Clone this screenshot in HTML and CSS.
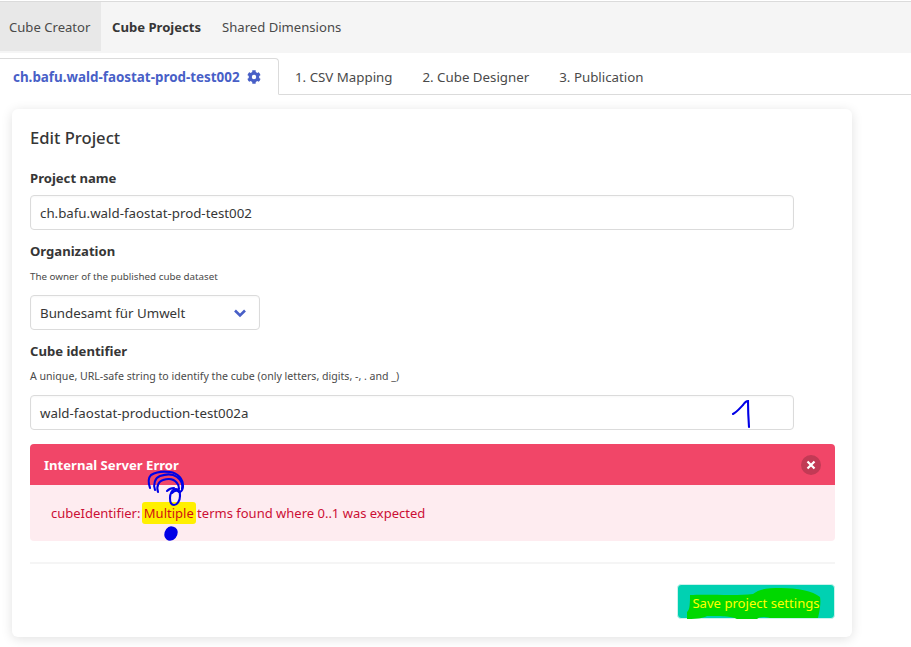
FILE: index.html
```html
<!DOCTYPE html>
<html lang="en">
<head>
<meta charset="utf-8">
<title>Edit Project</title>
<link rel="stylesheet" href="styles.css">
</head>
<body>
<nav class="navbar">
  <a class="nav-item nav-brand">Cube Creator</a>
  <a class="nav-item nav-active">Cube Projects</a>
  <a class="nav-item">Shared Dimensions</a>
</nav>
<div class="tabs">
  <a class="tab tab-active">ch.bafu.wald-faostat-prod-test002
    <svg class="gear" viewBox="0 0 512 512"><path fill-rule="evenodd" d="M487 316l-43-25a195 195 0 0 0 0-70l43-25c5-3 7-9 5-14-11-36-30-68-55-95-4-4-10-5-15-2l-43 25a191 191 0 0 0-60-35V25c0-6-4-11-9-12a201 201 0 0 0-110 0c-5 1-9 6-9 12v50a197 197 0 0 0-60 35L88 85c-5-3-11-2-15 2-25 27-44 59-55 95-2 5 0 11 5 14l43 25a195 195 0 0 0 0 70l-43 25c-5 3-7 9-5 14 11 36 30 68 55 95 4 4 10 5 15 2l43-25a191 191 0 0 0 60 35v50c0 6 4 11 9 12a201 201 0 0 0 110 0c5-1 9-6 9-12v-50a197 197 0 0 0 60-35l43 25c5 3 11 2 15-2 25-27 44-59 55-95 2-5 0-11-5-14zM256 336a80 80 0 1 1 0-160 80 80 0 0 1 0 160z"/></svg>
  </a>
  <a class="tab">1. CSV Mapping</a>
  <a class="tab">2. Cube Designer</a>
  <a class="tab">3. Publication</a>
</div>
<main class="card">
  <h1 class="title">Edit Project</h1>
  <div class="field">
    <label class="label">Project name</label>
    <div class="input">ch.bafu.wald-faostat-prod-test002</div>
  </div>
  <div class="field">
    <label class="label">Organization</label>
    <p class="help">The owner of the published cube dataset</p>
    <div class="select">Bundesamt für Umwelt
      <svg class="chevron" viewBox="0 0 14 10"><path d="M2 2.5l5 5 5-5" fill="none" stroke="#485fc7" stroke-width="2.6"/></svg>
    </div>
  </div>
  <div class="field">
    <label class="label">Cube identifier</label>
    <p class="help help-wide">A unique, URL-safe string to identify the cube (only letters, digits, -, . and _)</p>
    <div class="input">wald-faostat-production-test002a</div>
  </div>
  <section class="message">
    <header class="message-head">Internal Server Error
      <span class="delete"><svg viewBox="0 0 20 20"><path d="M6.5 6.5l7 7M13.5 6.5l-7 7" stroke="#fff" stroke-width="2.2"/></svg></span>
    </header>
    <div class="message-body">cubeIdentifier: <mark class="marker">Multiple</mark> terms found where 0..1 was expected</div>
  </section>
  <hr class="rule">
  <div class="actions">
    <button class="button">
      <svg class="scribble" viewBox="0 0 158 35"><path d="M13 11C30 10 60 12 76 10 82 5 90 4 104 4 120 4 136 7 143 13 144 18 143 26 141 34L93 34C86 32 82 33 80 35L60 35C56 33 52 32 30 32 26 34 22 35 10 35L10 28C12 26 13 24 13 11Z"/></svg>
      <span class="button-text">Save project settings</span>
    </button>
  </div>
</main>
<svg class="ink" viewBox="0 0 911 647" width="911" height="647" aria-hidden="true">
  <g class="pen">
    <path d="M733 414c4-2 8-7 10-9 2-3 4-4 5-4 0 4 0 12 1 26"/>
    <path d="M150 488c-2-6-2-10 1-13 5-3 12-4 19-3 8 1 13 7 13 14 0 3-1 5-3 6"/>
    <path d="M155 490c-2-6 0-12 5-14 6-2 13-2 17 1 4 3 6 7 5 12"/>
    <path d="M158 492c-2-6 1-11 5-12 6-2 11-1 14 3 2 2 2 4 2 6"/>
    <path d="M174 488c-3 0-5 1-7 3"/>
    <path d="M176 489c-4 0-6 5-6 9 0 5 2 7 4 7 3 0 6-4 6-9 0-4-1-7-4-7z"/>
    <path d="M172 493c3-3 5-3 7-1"/>
    <path class="dot" d="M171 527c-3 0-6 4-6 8 0 3 3 5 5 5 4 0 7-4 7-8 0-3-3-5-6-5z"/>
  </g>
</svg>
</body>
</html>
```
FILE: styles.css
```css
* { box-sizing: border-box; }
html, body { margin: 0; padding: 0; }
body {
  position: relative;
  width: 911px;
  height: 647px;
  overflow: hidden;
  background: #fff;
  color: #4a4a4a;
  font-family: "Noto Sans", sans-serif;
  font-size: 13.3px;
}
.navbar {
  display: flex;
  height: 52px;
  margin-top: 1px;
  border-top: 1px solid #dbdbdb;
  background: #f5f5f5;
}
.nav-item {
  display: flex;
  align-items: center;
  height: 49px;
  padding: 0 10px;
  color: #4a4a4a;
  font-size: 13.1px;
  white-space: nowrap;
}
.nav-brand { width: 101px; margin-right: 1px; padding-left: 9px; background: #e8e8e8; }
.nav-active { padding-right: 11px; font-weight: 700; color: #363636; }
.tabs {
  display: flex;
  height: 37px;
  margin-top: 5px;
  border-bottom: 1px solid #dbdbdb;
}
.tab {
  display: flex;
  align-items: center;
  padding: 2px 15px 0;
  color: #4a4a4a;
}
.tab-active {
  width: 279px;
  height: 37px;
  margin-right: 1px;
  padding: 1px 0 0 13px;
  border: 1px solid #dbdbdb;
  border-bottom-color: #fff;
  border-left: 0;
  border-radius: 0 4px 0 0;
  color: #485fc7;
  font-size: 13.4px;
  font-weight: 700;
  white-space: nowrap;
}
.gear { width: 14px; height: 14px; margin-left: 7px; fill: #485fc7; }
.card {
  width: 840px;
  height: 528px;
  margin: 14px 0 0 12px;
  padding: 17px 17px 0 18px;
  border-radius: 6px;
  background: #fff;
  box-shadow: 0 2px 12px rgba(10, 10, 10, 0.12);
}
.title {
  margin: 0 0 19px;
  height: 24px;
  color: #363636;
  font-size: 16.6px;
  line-height: 24px;
  font-weight: 500;
}
.field { margin-bottom: 12px; }
.label {
  display: block;
  height: 19px;
  margin-bottom: 7px;
  color: #363636;
  font-size: 13.1px;
  line-height: 19px;
  font-weight: 700;
}
.help {
  height: 14px;
  margin: 9px 0 11px;
  font-size: 9.8px;
  line-height: 14px;
}
.help-wide { margin: 8px 0 12px; font-size: 10.6px; }
.input, .select {
  display: flex;
  align-items: center;
  width: 764px;
  height: 35px;
  padding: 0 9px;
  border: 1px solid #dbdbdb;
  border-radius: 4px;
  background: #fff;
  color: #363636;
  box-shadow: inset 0 1px 2px rgba(10, 10, 10, 0.03);
}
.select { justify-content: space-between; width: 230px; padding-right: 12px; }
.chevron { width: 14px; height: 10px; }
.message { margin-top: 14px; width: 805px; height: 97px; }
.message-head {
  display: flex;
  align-items: center;
  justify-content: space-between;
  height: 41px;
  padding: 0 14px;
  border-radius: 4px 4px 0 0;
  background: #f14668;
  color: #fff;
  font-size: 13.1px;
  font-weight: 700;
}
.delete {
  display: block;
  width: 20px;
  height: 20px;
  border-radius: 50%;
  background: rgba(10, 10, 10, 0.2);
}
.delete svg { display: block; width: 20px; height: 20px; }
.message-body {
  height: 56px;
  padding: 0 21px;
  border-radius: 0 0 4px 4px;
  background: #feecf0;
  color: #cc0f35;
  font-size: 13px;
  line-height: 56px;
  white-space: pre;
}
.marker {
  padding: 2px 2px 2px;
  margin: 0 -2px;
  border-radius: 3px;
  background: #fff000;
  color: #d01010;
}
.rule {
  width: 805px;
  height: 2px;
  margin: 21px 0 20px;
  border: 0;
  background: #f5f5f5;
}
.actions { display: flex; justify-content: flex-end; width: 805px; }
.button {
  position: relative;
  display: flex;
  align-items: center;
  justify-content: center;
  width: 158px;
  height: 35px;
  padding: 0;
  border: 1px solid #c9f3ec;
  border-radius: 4px;
  background: #00d1b2;
  font-family: inherit;
  font-size: 13.1px;
}
.scribble { position: absolute; left: -1px; top: -1px; width: 158px; height: 35px; fill: #00d800; }
.button-text {
  position: relative;
  margin-top: 4px;
  color: #ffff00;
  line-height: 19px;
  white-space: nowrap;
}
.ink { position: absolute; left: 0; top: 0; pointer-events: none; }
.pen { fill: none; stroke: #0000e6; stroke-width: 2.1; stroke-linecap: round; }
.dot { fill: #0000e6; stroke-width: 1.5; }
```
